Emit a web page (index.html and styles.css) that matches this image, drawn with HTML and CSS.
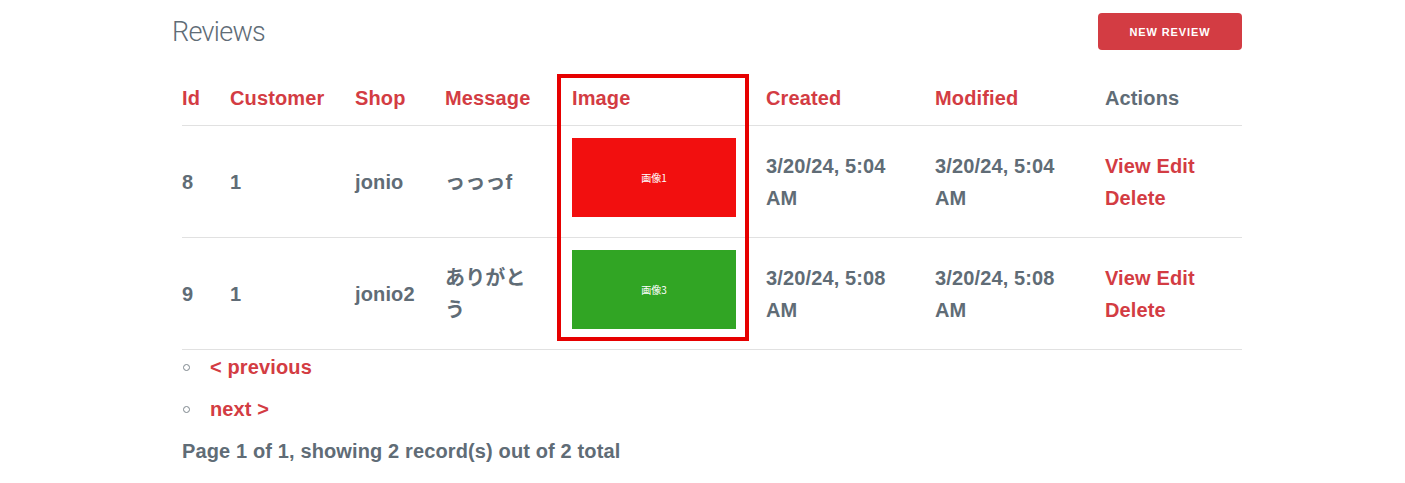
FILE: index.html
```html
<!DOCTYPE html>
<html lang="ja">
<head>
<meta charset="utf-8">
<title>Reviews</title>
<link rel="stylesheet" href="styles.css">
</head>
<body>
<div class="content">
  <div class="topbar">
    <h3 class="title">Reviews</h3>
    <a class="button" href="#">NEW REVIEW</a>
  </div>
  <div class="table-wrap">
    <table class="grid">
      <colgroup>
        <col class="c-id"><col class="c-customer"><col class="c-shop"><col class="c-message">
        <col class="c-image"><col class="c-created"><col class="c-modified"><col class="c-actions">
      </colgroup>
      <thead>
        <tr>
          <th><a href="#">Id</a></th>
          <th><a href="#">Customer</a></th>
          <th><a href="#">Shop</a></th>
          <th><a href="#">Message</a></th>
          <th><a href="#">Image</a></th>
          <th><a href="#">Created</a></th>
          <th><a href="#">Modified</a></th>
          <th class="plain">Actions</th>
        </tr>
      </thead>
      <tbody>
        <tr>
          <td>8</td>
          <td>1</td>
          <td>jonio</td>
          <td>っっっf</td>
          <td><div class="thumb thumb-red">画像1</div></td>
          <td>3/20/24, 5:04 AM</td>
          <td>3/20/24, 5:04 AM</td>
          <td class="actions"><a href="#">View</a> <a href="#">Edit</a> <a href="#">Delete</a></td>
        </tr>
        <tr>
          <td>9</td>
          <td>1</td>
          <td>jonio2</td>
          <td>ありがとう</td>
          <td><div class="thumb thumb-green">画像3</div></td>
          <td>3/20/24, 5:08 AM</td>
          <td>3/20/24, 5:08 AM</td>
          <td class="actions"><a href="#">View</a> <a href="#">Edit</a> <a href="#">Delete</a></td>
        </tr>
      </tbody>
    </table>
    <div class="highlight"></div>
    <ul class="pagination">
      <li><a href="#">&lt; previous</a></li>
      <li><a href="#">next &gt;</a></li>
    </ul>
    <p class="counter">Page 1 of 1, showing 2 record(s) out of 2 total</p>
  </div>
</div>
</body>
</html>
```

FILE: styles.css
```css
html, body {
  margin: 0;
  padding: 0;
  background: #ffffff;
}

body {
  font-family: "Liberation Sans", "Noto Sans CJK JP", sans-serif;
  font-weight: 700;
  font-size: 20px;
  letter-spacing: 0.13px;
  line-height: 32px;
  color: #606c76;
}

a {
  color: #d33c43;
  text-decoration: none;
}

.content {
  width: 1070px;
  margin-left: 172px;
  padding-top: 13px;
}

.topbar {
  display: flex;
  justify-content: space-between;
  align-items: center;
  height: 37px;
}

.title {
  margin: 0;
  padding-top: 2px;
  font-family: Roboto, "Liberation Sans", sans-serif;
  font-weight: 300;
  font-size: 27px;
  letter-spacing: -0.7px;
  line-height: 37px;
  color: #606c76;
}

.button {
  display: flex;
  align-items: center;
  justify-content: center;
  box-sizing: border-box;
  width: 144px;
  height: 37px;
  padding-top: 2px;
  border-radius: 4px;
  background: #d33c43;
  color: #ffffff;
  font-size: 11px;
  letter-spacing: 0.9px;
  line-height: 1;
}

.table-wrap {
  position: relative;
  margin-left: 10px;
  margin-top: 20px;
}

.grid {
  width: 1060px;
  table-layout: fixed;
  border-collapse: collapse;
  border-spacing: 0;
}

.c-id { width: 33px; }
.c-customer { width: 125px; }
.c-shop { width: 90px; }
.c-message { width: 127px; }
.c-image { width: 194px; }
.c-created { width: 169px; }
.c-modified { width: 170px; }
.c-actions { width: 152px; }

.grid th,
.grid td {
  padding: 12px 15px;
  text-align: left;
  border-bottom: 1px solid #e1e1e1;
  vertical-align: middle;
}

.grid th {
  padding-bottom: 11px;
}

.grid th:first-child,
.grid td:first-child {
  padding-left: 0;
}

.grid th:last-child,
.grid td:last-child {
  padding-right: 0;
}

.grid th.plain {
  color: #606c76;
}

.thumb {
  width: 164px;
  height: 79px;
  margin-bottom: 8px;
  display: flex;
  align-items: center;
  justify-content: center;
  color: #ffffff;
  font-family: "Noto Sans CJK JP", sans-serif;
  font-weight: 400;
  font-size: 10px;
  letter-spacing: 0;
  line-height: 1;
}

.thumb-red { background: #f20f0f; }
.thumb-green { background: #31a524; }

.highlight {
  position: absolute;
  left: 375px;
  top: 4px;
  width: 192px;
  height: 267px;
  box-sizing: border-box;
  border: 4px solid #e60000;
  pointer-events: none;
}

.pagination {
  list-style: none;
  margin: 1px 0 0 0;
  padding: 0;
}

.pagination li {
  display: flex;
  align-items: center;
  margin-bottom: 10px;
}

.pagination li::before {
  content: "";
  width: 5px;
  height: 5px;
  border: 1px solid #7d868d;
  border-radius: 50%;
  margin-left: 1px;
  margin-right: 20px;
}

.counter {
  margin: 0;
}
```
